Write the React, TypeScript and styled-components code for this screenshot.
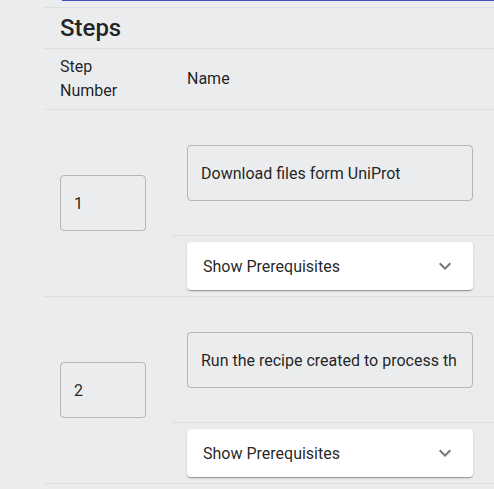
import React from "react";
import styled, { createGlobalStyle } from "styled-components";

const Global = createGlobalStyle`
  html, body { margin: 0; padding: 0; }
  body {
    background: #ebecee;
    font-family: Roboto, "Liberation Sans", Arial, sans-serif;
    color: rgba(0,0,0,0.87);
    overflow: hidden;
  }
`;

const Page = styled.div`
  padding-left: 44px;
  width: 450px;
`;

const BlueRule = styled.div`
  height: 1px;
  margin-left: 18px;
  background: #3f51b5;
`;

const Section = styled.section`
  margin-top: 6px;
  border-top: 1px solid #dedfe1;
`;

const Title = styled.h2`
  margin: 0;
  height: 41px;
  box-sizing: border-box;
  padding: 4px 16px 5px;
  font-size: 24px;
  line-height: 32px;
  font-weight: 500;
  border-bottom: 1px solid #dedfe1;
`;

const Row = styled.div`
  display: grid;
  grid-template-columns: 127px 1fr;
  border-bottom: 1px solid #dedfe1;
`;

const HeadCell = styled.div<{ $wrap?: boolean }>`
  padding: 6px ${(p) => (p.$wrap ? "24px" : "21px")} 6px 16px;
  font-size: 16px;
  line-height: 24px;
  display: flex;
  align-items: center;
`;

const NumCell = styled.div`
  display: flex;
  align-items: center;
  padding-left: 16px;
`;

const NameCell = styled.div`
  display: flex;
  flex-direction: column;
`;

const NameSub = styled.div`
  padding: 35px 21px 34px 16px;
  border-bottom: 1px solid #dedfe1;
`;

const PrereqSub = styled.div`
  padding: 6px 21px 6px 16px;
`;

const Field = styled.input<{ $w: number }>`
  box-sizing: border-box;
  width: ${(p) => p.$w}px;
  height: 56px;
  margin: 0;
  padding: 0 15px 0 13px;
  border: 1px solid rgba(0, 0, 0, 0.23);
  border-radius: 4px;
  background: transparent;
  font-family: Roboto, "Liberation Sans", Arial, sans-serif;
  font-size: 16px;
  color: rgba(0, 0, 0, 0.87);
  outline: none;
  display: block;
`;

const Card = styled.div`
  box-sizing: border-box;
  width: 286px;
  height: 48px;
  padding: 0 16px;
  background: #fff;
  border-radius: 4px;
  box-shadow: 0px 2px 1px -1px rgba(0,0,0,0.2), 0px 1px 1px 0px rgba(0,0,0,0.14), 0px 1px 3px 0px rgba(0,0,0,0.12);
  display: flex;
  align-items: center;
  justify-content: space-between;
  font-size: 16px;
`;

const Chevron = () => (
  <svg width="24" height="24" viewBox="0 0 24 24" fill="rgba(0,0,0,0.54)">
    <path d="M16.59 8.59 12 13.17 7.41 8.59 6 10l6 6 6-6z" />
  </svg>
);

const steps = [
  { n: "1", name: "Download files form UniProt" },
  { n: "2", name: "Run the recipe created to process the downloaded files" },
];

export default function App() {
  return (
    <>
      <Global />
      <Page>
        <BlueRule />
        <Section>
          <Title>Steps</Title>
          <Row>
            <HeadCell $wrap>Step Number</HeadCell>
            <HeadCell>Name</HeadCell>
          </Row>
          {steps.map((s) => (
            <Row key={s.n}>
              <NumCell>
                <Field $w={86} defaultValue={s.n} readOnly />
              </NumCell>
              <NameCell>
                <NameSub>
                  <Field $w={286} defaultValue={s.name} readOnly />
                </NameSub>
                <PrereqSub>
                  <Card>
                    <span>Show Prerequisites</span>
                    <Chevron />
                  </Card>
                </PrereqSub>
              </NameCell>
            </Row>
          ))}
        </Section>
      </Page>
    </>
  );
}
